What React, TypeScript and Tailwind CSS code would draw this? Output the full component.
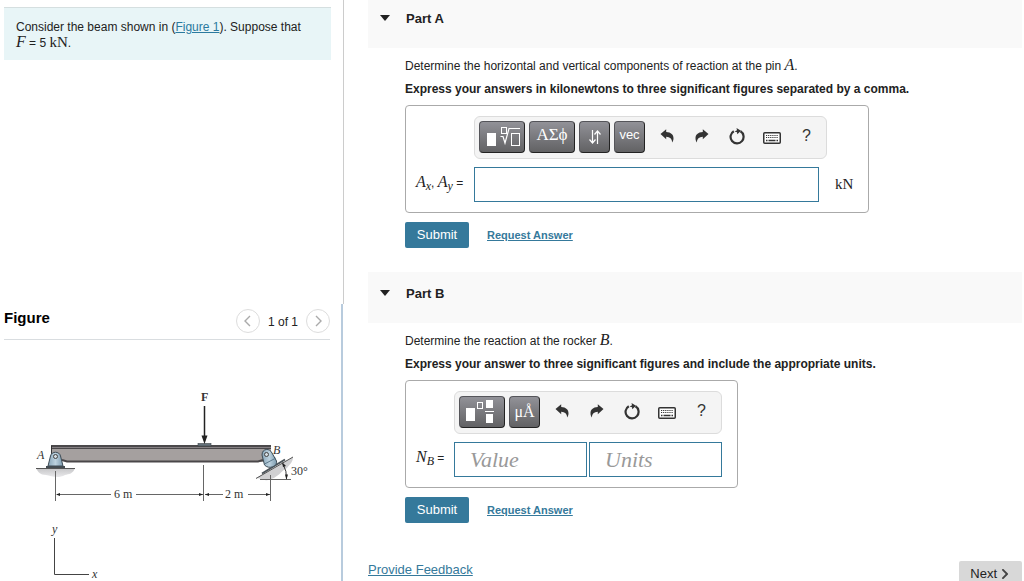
import type { ReactNode } from "react";
import { FaChevronRight } from "react-icons/fa";

const SANS = "font-['Liberation_Sans',Arial,sans-serif]";
const SERIF = "font-['Liberation_Serif','Times_New_Roman',serif]";

function MathVar({ name, sub }: { name: string; sub?: string }) {
  return (
    <span className={`${SERIF} text-base leading-none italic`}>
      {name}
      {sub && <sub className="bottom-[-3px] text-xs">{sub}</sub>}
    </span>
  );
}

function UndoIcon() {
  return (
    <svg width="14" height="14" viewBox="0 0 14 14" fill="#333" aria-hidden="true">
      <path d="M.5 5 6.200.3v2.800c4.900.2 7.300 2.800 7.300 6.200 0 1.600-.5 3-1.300 4.200C12 9.900 10 7.900 6.200 7.800v2.400L.5 5Z" />
    </svg>
  );
}

function RedoIcon() {
  return (
    <svg width="14" height="14" viewBox="0 0 14 14" fill="#333" aria-hidden="true">
      <path d="M13.500 5 7.800.3v2.800C2.900 3.300.5 5.900.5 9.300c0 1.600.5 3 1.300 4.200C2 9.900 4 7.900 7.800 7.800v2.400L13.500 5Z" />
    </svg>
  );
}

function ResetIcon() {
  return (
    <svg width="16" height="18" viewBox="0 0 16 18" aria-hidden="true">
      <path d="M11.500 4.300A6.500 6.500 0 1 1 4.800 4.200" fill="none" stroke="#333" strokeWidth="2.200" />
      <path d="M5.500 4.600 8 3.200 7.500 1 12 3.800 8.300 7.200 8 5.200Z" fill="#333" />
    </svg>
  );
}

function KeyboardIcon() {
  return (
    <svg width="18" height="16" viewBox="0 -4 18 16" aria-hidden="true">
      <rect x=".75" y=".75" width="16.500" height="10.500" rx="1" fill="#fff" stroke="#333" strokeWidth="1.500" />
      <path d="M3 3.500h12M3 5.500h12" stroke="#333" strokeDasharray="1.200 .9" />
      <path d="M3 8.500h1.500M5.500 8.500h7M13.500 8.500H15" stroke="#333" strokeWidth="1.300" />
    </svg>
  );
}

function RootTemplateIcon() {
  return (
    <svg width="36" height="22" viewBox="0 0 36 22" fill="none" stroke="#fff" aria-hidden="true">
      <rect x="3" y="7" width="9" height="13" fill="#fff" stroke="none" />
      <rect x="17.500" y="1.500" width="5" height="6" />
      <path d="M16.500 10.500h2.500L21 17l4-14.500H37" strokeWidth="1.200" />
      <rect x="27.500" y="7.500" width="8" height="12" />
    </svg>
  );
}

function FractionTemplateIcon() {
  return (
    <svg width="34" height="24" viewBox="0 0 34 24" fill="#fff" aria-hidden="true">
      <rect x="1" y="8" width="9" height="13" />
      <rect x="12.500" y="2.500" width="5" height="6" fill="none" stroke="#fff" />
      <rect x="21" y="0" width="7" height="8" />
      <rect x="20" y="11" width="9" height="1" />
      <rect x="21" y="14" width="7" height="9" />
    </svg>
  );
}

function ArrowsIcon() {
  return (
    <svg width="12" height="14" viewBox="0 0 12 14" fill="none" stroke="#fff" aria-hidden="true">
      <path d="M3.500 0v13M.5 9.500l3 3.500 3-3.500M8.500 14V1M5.500 4.500l3-3.500 3 3.500" strokeWidth="1.200" />
    </svg>
  );
}

function PaletteButton({ label, wide, children }: { label: string; wide?: boolean; children: ReactNode }) {
  return (
    <button
      type="button"
      aria-label={label}
      className={`flex h-8 shrink-0 items-center justify-center rounded border border-[#55555a] border-r-[#222] border-b-[#222] bg-linear-to-b from-[#929298] to-[#626264] text-white ${wide ? "w-[46px]" : "w-[31px]"}`}
    >
      {children}
    </button>
  );
}

function Toolbar({ children }: { children: ReactNode }) {
  const tools = [
    { label: "Undo", icon: <UndoIcon /> },
    { label: "Redo", icon: <RedoIcon /> },
    { label: "Reset", icon: <ResetIcon /> },
    { label: "Keyboard shortcuts", icon: <KeyboardIcon /> },
    { label: "Help", icon: <span className="text-base text-[#333]">?</span> },
  ];

  return (
    <div className="col-start-2 flex h-[43px] items-center justify-self-start rounded-md border border-[#dcdcdc] bg-[#f4f4f4] pr-0.5 pb-px pl-1">
      <div className="flex gap-1 pr-1">{children}</div>
      {tools.map((tool) => (
        <button key={tool.label} type="button" aria-label={tool.label} className="flex h-8 w-[35px] items-center justify-center pb-0.5">
          {tool.icon}
        </button>
      ))}
    </div>
  );
}

interface PartProps {
  title: string;
  question: ReactNode;
  hint: string;
  children: ReactNode;
}

function Part({ title, question, hint, children }: PartProps) {
  return (
    <section>
      <button type="button" className="flex h-[51px] w-full items-start bg-[#f9f9f9] pt-3 pl-3 text-left">
        <svg width="10" height="6" viewBox="0 0 10 6" className="mt-1.5 mr-4" aria-hidden="true">
          <path d="M0 0h10L5 6Z" fill="#222" />
        </svg>
        <span className="text-[13px] leading-5 font-bold">{title}</span>
      </button>
      <div className="pt-[9px] pb-6 pl-[37px]">
        <p className="h-4 text-xs leading-4">{question}</p>
        <p className="mt-2 text-xs leading-4 font-bold">{hint}</p>
        {children}
        <div className="mt-[9px] flex items-center gap-[18px]">
          <button type="button" className="h-[26px] w-16 rounded-xs bg-[#35799b] text-[13px] text-white">
            Submit
          </button>
          <a href="#" className="text-[11px] leading-4 font-bold text-[#35799b] underline">
            Request Answer
          </a>
        </div>
      </div>
    </section>
  );
}

function BeamFigure() {
  return (
    <svg viewBox="0 340 330 241" className={`${SERIF} block w-[330px]`} role="img" aria-label="Beam with pin at A, rocker at B and load F">
      <defs>
        <linearGradient id="steel" x1="0" x2="1">
          <stop offset="0" stopColor="#87a5b8" />
          <stop offset=".5" stopColor="#bdd2df" />
          <stop offset="1" stopColor="#7b9aae" />
        </linearGradient>
        <linearGradient id="ground" x1="0" x2="0" y1="0" y2="1">
          <stop offset="0" stopColor="#c4c4c6" />
          <stop offset="1" stopColor="#e9e9eb" />
        </linearGradient>
      </defs>

      {/* beam */}
      <path d="M51 446H271V462H67L62 460H51Z" fill="#a5a09f" />
      <rect x="51" y="445" width="220" height="4" fill="#4b494b" />
      <rect x="51" y="447" width="220" height="1" fill="#858083" />
      <path d="M62 460 67 461.500H258L263 460" fill="none" stroke="#4a4749" strokeWidth="2" />
      <path d="M51.500 446V456" stroke="#333" />

      {/* pin A */}
      <path d="M36 468H75C73 474 69 474 65 475 58 479 51 476 46 475 40 475 38 472 36 468Z" fill="url(#ground)" />
      <path d="M36 468.500H75" stroke="#555" />
      <path d="M48 466 50.500 456C51.500 451 59.500 451 60.500 456L63 466Z" fill="url(#steel)" stroke="#3d4b55" />
      <rect x="46" y="466" width="19" height="2" fill="#444c52" />
      <circle cx="55.500" cy="456.500" r="2" fill="#d5dde2" stroke="#444" />

      {/* rocker B on the 30 degree incline */}
      <path d="M256 478 293 457C293 462 290 464 287 468 281 471 278 478 268 480 263 481 260 478 256 478Z" fill="#d0d0d2" />
      <path d="M256 478.500 293 457" stroke="#555" fill="none" />
      <path d="M262 473.500 285 459.500" stroke="#4b5359" strokeWidth="2" />
      <path d="M262 455C262 448 270 448 272 453L276.500 461C278 466 269 470 264.500 465Z" fill="url(#steel)" stroke="#3d4b55" />
      <path d="M264.500 464 276 458" stroke="#5d7a8c" />
      <circle cx="266.500" cy="454.500" r="2" fill="#d5dde2" stroke="#444" />
      <path d="M260 479.500H291" stroke="#666" />
      <path d="M283 464Q287 471 286.500 479" fill="none" stroke="#333" />
      <path d="M282 462 286 466 283 467ZM286.500 479.500 285 474.500H288Z" fill="#222" />

      {/* load F */}
      <rect x="198" y="443.500" width="13" height="2.500" fill="#65727b" stroke="#3d4449" strokeWidth=".6" />
      <path d="M204.500 406V437" stroke="#222" strokeWidth="1.500" />
      <path d="M201.500 435.500H207.500L204.500 444Z" fill="#222" />

      {/* dimensions */}
      <path d="M55.500 471V501M203.500 465V501M270.500 475V501" stroke="#666" />
      <path d="M57 494.500H111M136 494.500H203M205 494.500H223M248 494.500H270" stroke="#666" />
      <path d="M56 494.500 60 493V496ZM203 494.500 199 493V496ZM205 494.500 209 493V496ZM270 494.500 266 493V496Z" fill="#222" />

      {/* axes */}
      <path d="M54.500 538V574.500H89" fill="none" stroke="#444" />

      <g fill="#333" fontSize="12">
        <text x="201" y="401" fontWeight="bold">F</text>
        <text x="37" y="459" fontStyle="italic">A</text>
        <text x="273" y="454" fontStyle="italic">B</text>
        <text x="291" y="475">30°</text>
        <text x="114" y="498">6 m</text>
        <text x="225" y="498">2 m</text>
        <text x="52" y="533" fontStyle="italic">y</text>
        <text x="92" y="578" fontStyle="italic">x</text>
      </g>
    </svg>
  );
}

function PagerButton({ label, path }: { label: string; path: string }) {
  return (
    <button type="button" aria-label={label} className="flex size-6 items-center justify-center rounded-full border border-[#ddd]">
      <svg width="7" height="12" viewBox="0 0 7 12" fill="none" stroke="#aaa" strokeWidth="1.400" aria-hidden="true">
        <path d={path} />
      </svg>
    </button>
  );
}

export default function App() {
  return (
    <div className={`${SANS} flex h-screen overflow-hidden bg-white text-[#222]`}>
      <aside className="flex w-[344px] shrink-0 flex-col">
        <div className="min-h-0 flex-1 border-r border-[#ccc] pt-[7px] pr-3 pl-1">
          <p className="border-t border-[#d5dfe0] bg-[#e8f5f7] px-3 pt-3 pb-2.5 text-xs leading-[14px]">
            Consider the beam shown in (
            <a href="#" className="text-[#2b7a9f] underline">
              Figure 1
            </a>
            ). Suppose that
            <br />
            <MathVar name="F" /> = 5 <span className={`${SERIF} text-[15px] leading-none`}>kN</span>.
          </p>
        </div>
        <section className="mr-px border-r-2 border-[#b8cbdd] pr-[11px]">
          <div className="ml-1 flex h-9 items-center border-b border-[#d9dde0] pb-0.5">
            <h2 className="flex-1 pb-1 text-[15px] font-bold text-black">Figure</h2>
            <div className="flex items-center gap-2">
              <PagerButton label="Previous figure" path="M6 1 1 6l5 5" />
              <span className="pt-0.5 text-xs">1 of 1</span>
              <PagerButton label="Next figure" path="m1 1 5 5-5 5" />
            </div>
          </div>
          <BeamFigure />
        </section>
      </aside>

      <main className="mt-[-3px] min-w-0 flex-1 pr-0.5 pl-6">
        <Part
          title="Part A"
          question={
            <>
              Determine the horizontal and vertical components of reaction at the pin <MathVar name="A" />.
            </>
          }
          hint="Express your answers in kilonewtons to three significant figures separated by a comma."
        >
          <div className="mt-2 grid w-fit grid-cols-[58px_auto] gap-y-2 rounded border border-[#aaa] py-2.5 pr-[15px] pl-2.5">
            <Toolbar>
              <PaletteButton label="Templates" wide>
                <RootTemplateIcon />
              </PaletteButton>
              <PaletteButton label="Greek letters" wide>
                <span className={`${SERIF} pb-1 text-[17px]`}>ΑΣϕ</span>
              </PaletteButton>
              <PaletteButton label="Arrows">
                <ArrowsIcon />
              </PaletteButton>
              <PaletteButton label="Vectors">
                <span className="pb-1 text-[13px]">vec</span>
              </PaletteButton>
            </Toolbar>
            <label htmlFor="reactions" className="self-center pb-1 text-xs whitespace-nowrap">
              <MathVar name="A" sub="x" />, <MathVar name="A" sub="y" /> =
            </label>
            <div className="flex items-center gap-4">
              <input id="reactions" type="text" className="h-[35px] w-[345px] border border-[#35799b] px-2 outline-none" />
              <span className={`${SERIF} w-[18px] text-[15px]`}>kN</span>
            </div>
          </div>
        </Part>

        <Part
          title="Part B"
          question={
            <>
              Determine the reaction at the rocker <MathVar name="B" />.
            </>
          }
          hint="Express your answer to three significant figures and include the appropriate units."
        >
          <div className="mt-2 grid w-fit grid-cols-[38px_auto] gap-y-2 rounded border border-[#aaa] py-2.5 pr-[15px] pl-2.5">
            <Toolbar>
              <PaletteButton label="Templates" wide>
                <FractionTemplateIcon />
              </PaletteButton>
              <PaletteButton label="Units">
                <span className={`${SERIF} text-base`}>μÅ</span>
              </PaletteButton>
            </Toolbar>
            <label htmlFor="value" className="self-center pb-1 text-xs whitespace-nowrap">
              <MathVar name="N" sub="B" /> =
            </label>
            <div className="flex gap-0.5">
              <input
                id="value"
                type="text"
                placeholder="Value"
                className={`${SERIF} h-[35px] w-[133px] border border-[#35799b] px-[15px] text-[22px] italic outline-none placeholder:text-[#999]`}
              />
              <input
                type="text"
                aria-label="Units"
                placeholder="Units"
                className={`${SERIF} h-[35px] w-[133px] border border-[#35799b] px-[15px] text-[22px] italic outline-none placeholder:text-[#999]`}
              />
            </div>
          </div>
        </Part>

        <div className="flex items-start justify-between pt-3.5">
          <a href="#" className="text-[13px] leading-[18px] text-[#35799b] underline">
            Provide Feedback
          </a>
          <button type="button" className="flex h-[26px] items-center gap-0.5 rounded-xs bg-[#d8d8d8] px-[11px] text-[13px]">
            Next
            <FaChevronRight className="size-3 text-[#444]" />
          </button>
        </div>
      </main>
    </div>
  );
}
